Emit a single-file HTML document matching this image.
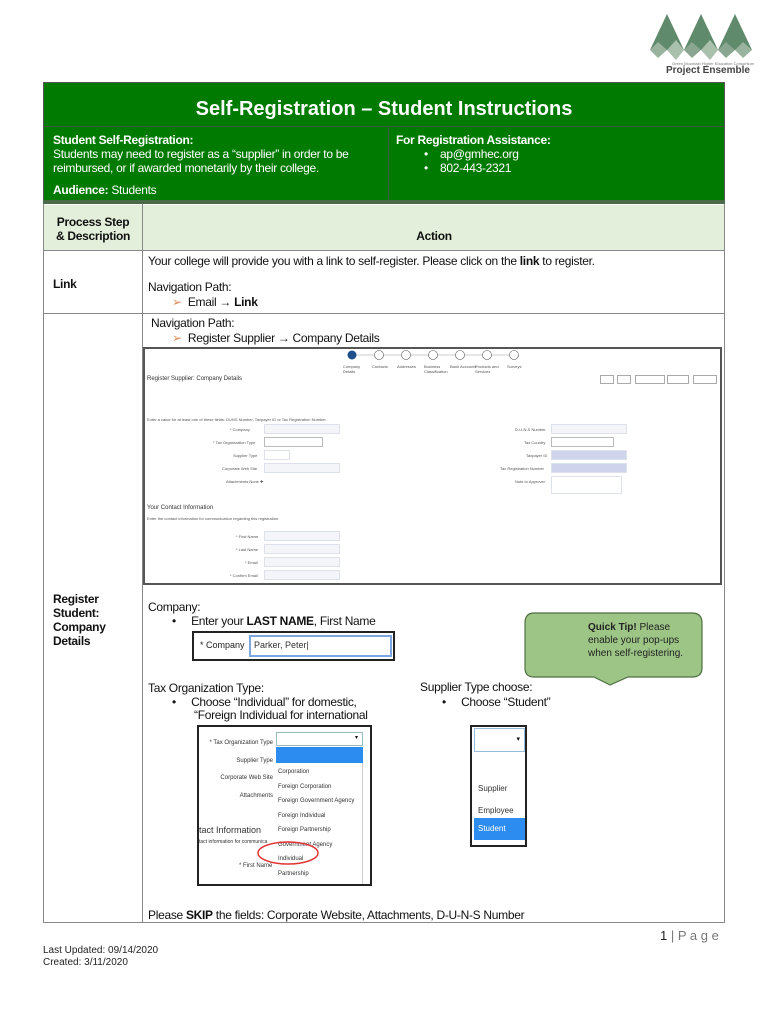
<!DOCTYPE html>
<html><head><meta charset="utf-8">
<style>
*{margin:0;padding:0;box-sizing:border-box}
body{width:770px;height:1024px;background:#fff;font-family:"Liberation Sans",Arial,sans-serif;position:relative;overflow:hidden;color:#111}
.a{position:absolute}
.t{font-size:12px;line-height:14px;letter-spacing:-0.3px}
.w{color:#fff}
.b{font-weight:bold}
.line{position:absolute;background:#888}
.f{position:absolute;background:#f3f5f9;border:1px solid #dde2ea}
.s{position:absolute;font-size:4px;color:#555;white-space:nowrap}
</style></head><body>

<!-- logo -->
<svg class="a" style="left:650px;top:12px" width="105" height="52" viewBox="0 0 105 52">
<polygon points="0,38 17,2 34,38" fill="#5f8a6c"/>
<polygon points="34,38 51,2 68,38" fill="#5f8a6c"/>
<polygon points="68,38 85,2 102,38" fill="#5f8a6c"/>
<polygon points="17,38 26,28 34,38 26,48" fill="#a9c0ad"/>
<polygon points="51,38 60,28 68,38 60,48" fill="#a9c0ad"/>
<polygon points="0,38 8,30 17,38 8,46" fill="#9ab39f"/>
<polygon points="85,38 93,30 102,38 93,46" fill="#9ab39f"/>
<polygon points="34,38 42,30 51,38 42,46" fill="#8aa690"/>
<polygon points="68,38 76,30 85,38 76,46" fill="#8aa690"/>
</svg>
<div class="a" style="left:672px;top:61px;font-size:4px;color:#777">Green Mountain Higher Education Consortium</div>
<div class="a b" style="left:666px;top:65px;font-size:10px;color:#444">Project Ensemble</div>

<!-- green header -->
<div class="a" style="left:43px;top:82px;width:682px;height:121px;background:#007a00;border:1px solid #555"></div>
<div class="a w b" style="left:43px;top:98px;width:682px;text-align:center;font-size:20px">Self-Registration – Student Instructions</div>
<div class="a" style="left:43px;top:126px;width:682px;height:1px;background:#3a5a3a"></div>
<div class="a" style="left:388px;top:126px;width:1px;height:76px;background:#3a5a3a"></div>
<div class="a w t" style="left:53px;top:133px"><b>Student Self-Registration:</b><br>Students may need to register as a “supplier” in order to be<br>reimbursed, or if awarded monetarily by their college.</div>
<div class="a w t" style="left:53px;top:183px"><b>Audience:</b> Students</div>
<div class="a w t" style="left:396px;top:133px"><b>For Registration Assistance:</b></div>
<div class="a w t" style="left:424px;top:147px">•&nbsp;&nbsp;&nbsp;&nbsp;ap@gmhec.org<br>•&nbsp;&nbsp;&nbsp;&nbsp;802-443-2321</div>
<div class="a" style="left:43px;top:200px;width:682px;height:4px;background:#4a6a4a"></div>

<!-- table -->
<div class="a" style="left:43px;top:204px;width:682px;height:719px;border:1px solid #888;border-top:none"></div>
<div class="a" style="left:44px;top:205px;width:680px;height:45px;background:#e3efda"></div>
<div class="line" style="left:142px;top:204px;width:1px;height:719px"></div>
<div class="line" style="left:43px;top:250px;width:682px;height:1px"></div>
<div class="line" style="left:43px;top:313px;width:682px;height:1px"></div>
<div class="a t b" style="left:44px;top:215px;width:98px;text-align:center">Process Step<br>&amp; Description</div>
<div class="a t b" style="left:143px;top:229px;width:582px;text-align:center">Action</div>

<div class="a t" style="left:148px;top:254px">Your college will provide you with a link to self-register. Please click on the <b>link</b> to register.</div>
<div class="a t b" style="left:53px;top:277px">Link</div>
<div class="a t" style="left:148px;top:280px">Navigation Path:</div>
<div class="a t" style="left:172px;top:295px"><span style="color:#d88a55">➢</span>&nbsp;&nbsp;Email → <b>Link</b></div>
<div class="a t" style="left:151px;top:316px">Navigation Path:</div>
<div class="a t" style="left:172px;top:331px"><span style="color:#d88a55">➢</span>&nbsp;&nbsp;Register Supplier → Company Details</div>

<!-- screenshot box -->
<div class="a" style="left:143px;top:347px;width:579px;height:238px;border:2px solid #555;background:#fff"></div>
<svg class="a" style="left:340px;top:348px" width="190" height="14">
<line x1="12" y1="7" x2="178" y2="7" stroke="#999" stroke-width="0.6"/>
<circle cx="12" cy="7" r="4.5" fill="#1f4e8c"/>
<g fill="#fff" stroke="#555" stroke-width="0.6"><circle cx="39" cy="7" r="4.5"/><circle cx="66" cy="7" r="4.5"/><circle cx="93" cy="7" r="4.5"/><circle cx="120" cy="7" r="4.5"/><circle cx="147" cy="7" r="4.5"/><circle cx="174" cy="7" r="4.5"/></g>
</svg>
<div class="s" style="left:343px;top:364px">Company<br>Details</div>
<div class="s" style="left:372px;top:364px">Contacts</div>
<div class="s" style="left:397px;top:364px">Addresses</div>
<div class="s" style="left:424px;top:364px">Business<br>Classification</div>
<div class="s" style="left:450px;top:364px">Bank Accounts</div>
<div class="s" style="left:475px;top:364px">Products and<br>Services</div>
<div class="s" style="left:507px;top:364px">Surveys</div>
<div class="a" style="left:147px;top:376px;font-size:6px;color:#333">Register Supplier: Company Details</div>
<div class="a" style="left:600px;top:375px;width:117px;height:9px">
<span style="position:absolute;left:0;width:14px;height:9px;border:1px solid #aaa"></span>
<span style="position:absolute;left:17px;width:14px;height:9px;border:1px solid #aaa"></span>
<span style="position:absolute;left:35px;width:30px;height:9px;border:1px solid #aaa"></span>
<span style="position:absolute;left:67px;width:22px;height:9px;border:1px solid #aaa"></span>
<span style="position:absolute;left:93px;width:24px;height:9px;border:1px solid #aaa"></span>
</div>
<div class="s" style="left:147px;top:417px">Enter a value for at least one of these fields: DUNS Number, Taxpayer ID or Tax Registration Number.</div>
<div class="f" style="left:264px;top:424px;width:76px;height:10px"></div>
<div class="f" style="left:264px;top:437px;width:59px;height:10px;background:#fff;border-color:#bbb"></div>
<div class="f" style="left:264px;top:450px;width:26px;height:10px;background:#fff"></div>
<div class="f" style="left:264px;top:463px;width:76px;height:10px"></div>
<div class="f" style="left:551px;top:424px;width:76px;height:10px"></div>
<div class="f" style="left:551px;top:437px;width:63px;height:10px;background:#fff;border-color:#bbb"></div>
<div class="f" style="left:551px;top:450px;width:76px;height:10px;background:#cfd3ec"></div>
<div class="f" style="left:551px;top:463px;width:76px;height:10px;background:#cfd3ec"></div>
<div class="f" style="left:551px;top:476px;width:71px;height:18px;background:#fff"></div>
<div class="s" style="left:230px;top:427px">* Company</div>
<div class="s" style="left:213px;top:440px">* Tax Organization Type</div>
<div class="s" style="left:233px;top:453px">Supplier Type</div>
<div class="s" style="left:222px;top:466px">Corporate Web Site</div>
<div class="s" style="left:226px;top:479px">Attachments None ✚</div>
<div class="s" style="left:515px;top:427px">D-U-N-S Number</div>
<div class="s" style="left:524px;top:440px">Tax Country</div>
<div class="s" style="left:526px;top:453px">Taxpayer ID</div>
<div class="s" style="left:500px;top:466px">Tax Registration Number</div>
<div class="s" style="left:515px;top:479px">Note to Approver</div>
<div class="a" style="left:147px;top:505px;font-size:6px;color:#333">Your Contact Information</div>
<div class="s" style="left:147px;top:516px">Enter the contact information for communication regarding this registration.</div>
<div class="f" style="left:264px;top:531px;width:76px;height:10px"></div>
<div class="f" style="left:264px;top:544px;width:76px;height:10px"></div>
<div class="f" style="left:264px;top:557px;width:76px;height:10px"></div>
<div class="f" style="left:264px;top:570px;width:76px;height:10px"></div>
<div class="s" style="left:236px;top:534px">* First Name</div>
<div class="s" style="left:236px;top:547px">* Last Name</div>
<div class="s" style="left:245px;top:560px">* Email</div>
<div class="s" style="left:230px;top:573px">* Confirm Email</div>

<!-- register row label -->
<div class="a t b" style="left:53px;top:592px">Register<br>Student:<br>Company<br>Details</div>

<div class="a t" style="left:148px;top:600px">Company:</div>
<div class="a t" style="left:172px;top:614px">•&nbsp;&nbsp;&nbsp;&nbsp;&nbsp;Enter your <b>LAST NAME</b>, First Name</div>
<div class="a" style="left:192px;top:631px;width:203px;height:30px;border:2px solid #222;background:#fff"></div>
<div class="a" style="left:200px;top:640px;font-size:9px;color:#222">* Company</div>
<div class="a" style="left:249px;top:635px;width:143px;height:22px;border:2px solid #7ea6e0"></div>
<div class="a" style="left:254px;top:640px;font-size:9px;color:#333">Parker, Peter|</div>

<!-- tip bubble -->
<svg class="a" style="left:524px;top:612px" width="180" height="80">
<path d="M10 1 H168 Q178 1 178 11 V56 Q178 65 168 65 H104 L86 73 L70 65 H10 Q1 65 1 56 V11 Q1 1 10 1Z" fill="#9cc586" stroke="#4f6f42" stroke-width="1.2"/>
</svg>
<div class="a" style="left:588px;top:621px;font-size:10px;line-height:13px;color:#222"><b>Quick Tip!</b> Please<br>enable your pop-ups<br>when self-registering.</div>

<div class="a t" style="left:148px;top:681px">Tax Organization Type:</div>
<div class="a t" style="left:172px;top:695px">•&nbsp;&nbsp;&nbsp;&nbsp;&nbsp;Choose “Individual” for domestic,</div>
<div class="a t" style="left:194px;top:708px">“Foreign Individual for international</div>
<div class="a t" style="left:420px;top:680px">Supplier Type choose:</div>
<div class="a t" style="left:442px;top:695px">•&nbsp;&nbsp;&nbsp;&nbsp;&nbsp;Choose “Student”</div>

<!-- tax dropdown screenshot -->
<div class="a" style="left:197px;top:725px;width:175px;height:161px;border:2px solid #222;background:#fff;overflow:hidden">
 <div class="a" style="left:77px;top:5px;width:87px;height:14px;border:1px solid #9bb;background:#fff"><span style="position:absolute;right:4px;top:1px;font-size:6px">▾</span></div>
 <div class="a" style="left:77px;top:20px;width:87px;height:16px;background:#2d8cf0"></div>
 <div class="a" style="left:77px;top:36px;width:87px;height:125px;border-right:1px solid #ccc;background:#fff"></div>
 <div class="a" style="left:79px;top:38px;font-size:6px;line-height:14.5px;color:#333">Corporation<br>Foreign Corporation<br>Foreign Government Agency<br>Foreign Individual<br>Foreign Partnership<br>Government Agency<br>Individual<br>Partnership</div>
 <div class="a" style="left:8px;top:8px;font-size:6px;line-height:17.5px;color:#333;text-align:right;width:66px">* Tax Organization Type<br>Supplier Type<br>Corporate Web Site<br>Attachments</div>
 <div class="a" style="left:0;top:98px;font-size:9px;color:#333">tact Information</div>
 <div class="a" style="left:0;top:112px;font-size:5px;color:#333">tact information for communica</div>
 <div class="a" style="left:40px;top:136px;font-size:6px;color:#333">* First Name</div>
</div>
<svg class="a" style="left:255px;top:838px" width="70" height="30"><ellipse cx="33" cy="15" rx="30" ry="11" fill="none" stroke="#e23030" stroke-width="1.5"/></svg>

<!-- supplier type screenshot -->
<div class="a" style="left:470px;top:725px;width:57px;height:122px;border:2px solid #222;background:#fff">
 <div class="a" style="left:2px;top:1px;width:51px;height:24px;border:1px solid #9bd"><span style="position:absolute;right:4px;top:6px;font-size:7px">▾</span></div>
 <div class="a" style="left:6px;top:51px;font-size:8px;line-height:22px;color:#333">Supplier<br>Employee</div>
 <div class="a" style="left:2px;top:91px;width:51px;height:22px;background:#2d8cf0;color:#fff;font-size:8px;padding:6px 0 0 4px">Student</div>
</div>

<div class="a t" style="left:148px;top:908px">Please <b>SKIP</b> the fields: Corporate Website, Attachments, D-U-N-S Number</div>

<!-- footer -->
<div class="a" style="left:660px;top:928px;font-size:13px;color:#777"><span style="color:#222">1</span> | P a g e</div>
<div class="a" style="left:43px;top:945px;font-size:10px;line-height:12px;color:#222">Last Updated: 09/14/2020<br>Created: 3/11/2020</div>
</body></html>
